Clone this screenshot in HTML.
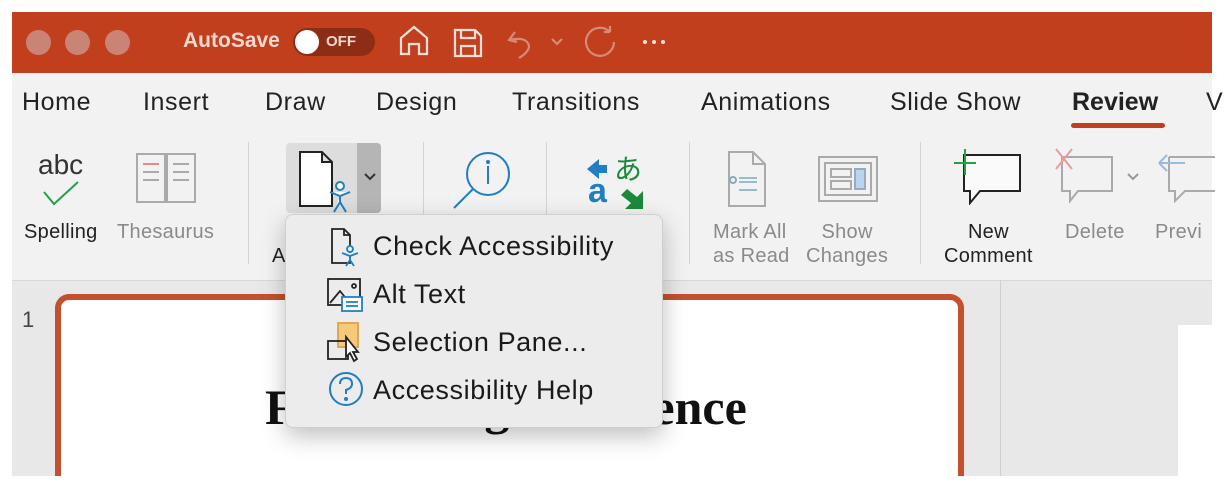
<!DOCTYPE html>
<html><head><style>
*{margin:0;padding:0;box-sizing:border-box}
html{width:1224px;height:488px;overflow:hidden}
body{width:1224px;height:488px;background:#fff;position:relative;overflow:hidden;font-family:"Liberation Sans",Helvetica,sans-serif}
.a{position:absolute}
.tb{left:12px;top:12px;width:1200px;height:61px;background:#c23f1d}
.dot{width:25px;height:25px;border-radius:50%;background:#c98476;top:30px}
.rib{left:12px;top:73px;width:1200px;height:207px;background:#f2f2f2}
.tab{top:88px;font-size:25px;color:#222;letter-spacing:0.6px}
.lbl{font-size:20px;color:#222;text-align:center;line-height:24px;letter-spacing:0.3px}
.g{color:#8a8a8a}
.sep{width:1px;background:#d4d4d4;top:142px;height:122px}
.bot{left:12px;top:280px;width:1200px;height:196px;background:#e8e8e8;border-top:1px solid #d8d8d8}
.menu{left:285px;top:214px;width:378px;height:214px;background:#ececec;border:1px solid #cfcfcf;border-radius:8px;box-shadow:0 8px 24px rgba(0,0,0,.25);z-index:5}
.mi{position:absolute;left:87px;font-size:27px;color:#1a1a1a;letter-spacing:0.6px}
</style></head><body>
<div class="a tb"></div>
<div class="a dot" style="left:26px"></div>
<div class="a dot" style="left:65px"></div>
<div class="a dot" style="left:105px"></div>
<div class="a" style="left:183px;top:29px;font-size:21px;color:#f3d8cf;font-weight:bold">AutoSave</div>
<div class="a" style="left:293px;top:28px;width:82px;height:28px;border-radius:14px;background:#8e2d16"></div>
<div class="a" style="left:295px;top:30px;width:24px;height:24px;border-radius:50%;background:#fff"></div>
<div class="a" style="left:326px;top:33px;font-size:15px;color:#f3d8cf;font-weight:bold">OFF</div>
<svg class="a" style="left:395px;top:22px" width="280" height="40" fill="none" stroke="#f5e1da" stroke-width="2.2">
<path d="M6 32V16L19 5L32 16V32H24V22H14V32Z"/>
<path d="M60 8H80L86 14V34H60Z M66 8V16H80V8 M66 34V24H80V34"/>
<path d="M120 10L114 18L122 20 M114 18Q132 14 134 24Q134 30 124 36" stroke="#d88a78"/>
<path d="M157 17L162 22L167 17" stroke="#d88a78"/>
<path d="M215 10A14 14 0 1 0 219 20M215 10V4M215 10H209" stroke="#d88a78"/>
<circle cx="250" cy="20" r="2" fill="#f5e1da" stroke="none"/><circle cx="259" cy="20" r="2" fill="#f5e1da" stroke="none"/><circle cx="268" cy="20" r="2" fill="#f5e1da" stroke="none"/>
</svg>
<div class="a rib"></div>
<div class="a tab" style="left:22px">Home</div>
<div class="a tab" style="left:143px">Insert</div>
<div class="a tab" style="left:265px">Draw</div>
<div class="a tab" style="left:376px">Design</div>
<div class="a tab" style="left:512px">Transitions</div>
<div class="a tab" style="left:701px">Animations</div>
<div class="a tab" style="left:890px">Slide Show</div>
<div class="a tab" style="left:1072px;font-weight:bold;letter-spacing:0">Review</div>
<div class="a tab" style="left:1206px">V</div>
<div class="a" style="left:1071px;top:123px;width:94px;height:5px;border-radius:3px;background:#c23f1d"></div>
<div class="a" style="left:38px;top:149px;font-size:28px;color:#333">abc</div>
<svg class="a" style="left:40px;top:180px" width="44" height="30"><path d="M4 12L14 24L38 2" stroke="#23a14a" stroke-width="2" fill="none"/></svg>
<svg class="a" style="left:135px;top:150px" width="64" height="56" fill="none" stroke="#aaa" stroke-width="2"><path d="M2 4H30V52H2Z M32 4H60V52H32Z M8 14H24M8 22H24M8 30H24M38 14H54M38 22H54M38 30H54"/><path d="M8 14H24" stroke="#e88"/></svg>
<div class="a lbl" style="left:24px;top:220px">Spelling</div>
<div class="a lbl g" style="left:117px;top:220px">Thesaurus</div>
<div class="a sep" style="left:248px"></div>
<div class="a" style="left:286px;top:143px;width:95px;height:70px;background:#ddd;border-radius:4px"></div>
<div class="a" style="left:357px;top:143px;width:24px;height:70px;background:#b5b5b5;border-radius:0 4px 4px 0"></div>
<svg class="a" style="left:296px;top:150px" width="60" height="64" fill="none" stroke="#222" stroke-width="2"><path d="M4 2H26L36 12V56H4Z M26 2V12H36" fill="#fff"/><g stroke="#1f7fc0" fill="#fff"><circle cx="44" cy="36" r="4"/><path d="M34 42L44 46L54 42M44 46V52L38 62M44 52L50 62"/></g></svg>
<svg class="a" style="left:363px;top:172px" width="14" height="10"><path d="M2 2L7 7L12 2" stroke="#333" stroke-width="2" fill="none"/></svg>
<div class="a lbl" style="left:272px;top:244px">A</div>
<div class="a sep" style="left:423px"></div>
<svg class="a" style="left:450px;top:150px" width="66" height="62" fill="none" stroke="#1f7fc0" stroke-width="2"><circle cx="38" cy="24" r="21"/><path d="M23 39L4 58M38 16V34"/><circle cx="38" cy="12" r="1" fill="#1f7fc0"/></svg>
<div class="a sep" style="left:546px"></div>
<div class="a" style="left:588px;top:172px;font-size:34px;color:#1f7fc0;font-weight:bold">a</div>
<div class="a" style="left:614px;top:148px;font-size:28px;color:#1b8a3a;font-family:'Noto Sans CJK JP',sans-serif">あ</div>
<svg class="a" style="left:585px;top:155px" width="64" height="56"><path d="M2 14L14 4V10H22V18H14V24Z" fill="#1f7fc0"/><path d="M58 36V54H40L46 48L36 40L42 34L52 42Z" fill="#1b8a3a"/></svg>
<div class="a sep" style="left:689px"></div>
<svg class="a" style="left:723px;top:150px" width="50" height="60" fill="none" stroke="#aaa" stroke-width="2"><path d="M6 2H30L42 14V56H6Z M30 2V14H42"/><circle cx="10" cy="30" r="3" stroke="#8ab"/><path d="M16 28H34M16 32H34M16 40H34" stroke="#9bc"/></svg>
<svg class="a" style="left:817px;top:155px" width="64" height="48" fill="none" stroke="#aaa" stroke-width="2"><rect x="2" y="2" width="58" height="44"/><rect x="8" y="8" width="46" height="32"/><rect x="14" y="14" width="20" height="8"/><rect x="14" y="26" width="20" height="8"/><rect x="38" y="14" width="10" height="20" fill="#b8d4ee" stroke="#9ab"/></svg>
<div class="a lbl g" style="left:713px;top:220px;text-align:left">Mark All<br>as Read</div>
<div class="a lbl g" style="left:806px;top:220px">Show<br>Changes</div>
<div class="a sep" style="left:920px"></div>
<svg class="a" style="left:950px;top:145px" width="80" height="60" fill="none" stroke-width="2"><path d="M14 10H70V46H30L20 58V46H14Z" stroke="#222" fill="#fafafa"/><path d="M4 18H26M15 4V30" stroke="#23a14a"/></svg>
<svg class="a" style="left:1040px;top:145px" width="80" height="60" fill="none" stroke-width="2"><path d="M22 12H72V46H38L30 56V46H22Z" stroke="#aaa"/><path d="M16 4L32 24M32 4L16 24" stroke="#e99"/></svg>
<svg class="a" style="left:1126px;top:172px" width="16" height="10"><path d="M2 2L7 7L12 2" stroke="#999" stroke-width="2" fill="none"/></svg>
<svg class="a" style="left:1155px;top:145px" width="60" height="60" fill="none" stroke-width="2"><path d="M14 12H60M14 12V46H20V56L30 46H60" stroke="#aaa"/><path d="M4 18H30M4 18L12 10M4 18L12 26" stroke="#9bd"/></svg>
<div class="a lbl" style="left:944px;top:220px">New<br>Comment</div>
<div class="a lbl g" style="left:1065px;top:220px">Delete</div>
<div class="a lbl g" style="left:1155px;top:220px">Previ</div>
<div class="a bot"></div>
<div class="a" style="left:22px;top:307px;font-size:22px;color:#444">1</div>
<div class="a" style="left:55px;top:294px;width:909px;height:182px;border:6px solid #c4502e;border-bottom:none;border-radius:14px 14px 0 0;background:#fff"></div>
<div class="a" style="left:1000px;top:280px;width:1px;height:196px;background:#d0d0d0"></div>
<div class="a" style="left:1178px;top:325px;width:34px;height:151px;background:#fff"></div>
<div class="a" style="left:265px;top:378px;font-size:50px;font-weight:bold;font-family:'Liberation Serif',serif;color:#111">Formatting Excellence</div>
<div class="a menu">
<svg class="a" style="left:44px;top:12px" width="34" height="40" fill="none" stroke="#222" stroke-width="1.8"><path d="M2 2H14L20 8V36H2Z M14 2V8H20"/><g stroke="#1f7fc0" fill="#ececec"><circle cx="20" cy="22" r="3"/><path d="M12 26L20 29L28 26M20 29V33L16 39M20 33L24 39"/></g></svg>
<div class="mi" style="top:16px">Check Accessibility</div>
<svg class="a" style="left:40px;top:62px" width="40" height="38" fill="none" stroke="#222" stroke-width="1.8"><rect x="2" y="2" width="32" height="26"/><path d="M4 26L14 14L22 24" /><circle cx="28" cy="9" r="2"/><rect x="16" y="20" width="20" height="14" stroke="#1f7fc0" fill="#fff"/><path d="M20 25H32M20 29H32" stroke="#1f7fc0"/></svg>
<div class="mi" style="top:64px">Alt Text</div>
<svg class="a" style="left:40px;top:106px" width="40" height="42" fill="none" stroke="#222" stroke-width="1.8"><rect x="12" y="2" width="20" height="24" fill="#f7c97a" stroke="#e0a04a"/><rect x="2" y="20" width="20" height="18"/><path d="M20 16V36L24 32L28 40L31 38L27 31H32Z" fill="#fff"/></svg>
<div class="mi" style="top:112px">Selection Pane...</div>
<svg class="a" style="left:42px;top:156px" width="36" height="36" fill="none" stroke="#1f7fc0" stroke-width="2"><circle cx="18" cy="18" r="16"/><path d="M12 13Q12 7 18 7Q24 7 24 13Q24 17 18 19V23"/><circle cx="18" cy="28" r="1" fill="#1f7fc0"/></svg>
<div class="mi" style="top:160px">Accessibility Help</div>
</div>
</body></html>
